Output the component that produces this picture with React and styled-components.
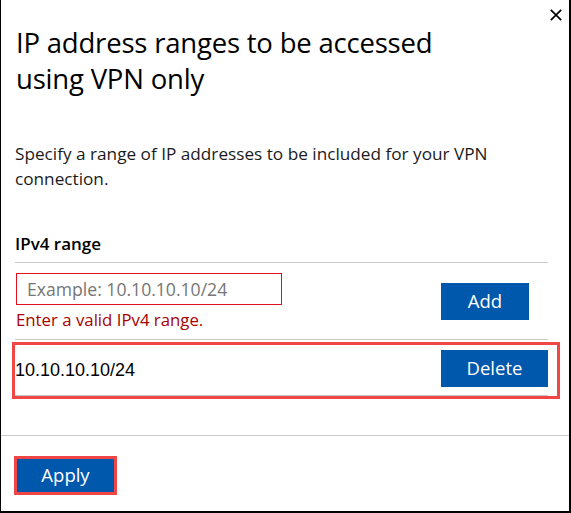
import React from "react";
import styled, { createGlobalStyle } from "styled-components";

const GlobalStyle = createGlobalStyle`
  html, body {
    margin: 0;
    padding: 0;
    background: #ffffff;
  }
  * {
    box-sizing: border-box;
  }
`;

const uiFont = `"Segoe UI", "Open Sans", "Noto Sans", sans-serif`;
const blue = "#0058ad";

const Dialog = styled.div`
  position: relative;
  width: 571px;
  height: 513px;
  display: flex;
  flex-direction: column;
  background: #ffffff;
  border-left: 1px solid #000;
  border-right: 2px solid #000;
  border-bottom: 2px solid #000;
  font-family: ${uiFont};
  color: #000;
`;

const CloseButton = styled.button`
  position: absolute;
  top: 9px;
  right: 7px;
  width: 12px;
  height: 12px;
  padding: 0;
  border: 0;
  background: none;
  cursor: pointer;
  display: block;
  svg {
    display: block;
  }
`;

const Title = styled.h2`
  margin: 25px 0 0;
  padding: 0 100px 0 15px;
  font-size: 27.5px;
  line-height: 36px;
  font-weight: 400;
  letter-spacing: -0.2px;
`;

const Body = styled.div`
  padding: 0 21px 0 14px;
`;

const Description = styled.p`
  margin: 44px 0 0;
  font-size: 17.2px;
  line-height: 25px;
  color: #1b1b1b;
`;

const FieldLabel = styled.div`
  margin: 41px 0 6px;
  font-size: 17px;
  line-height: 24px;
  font-weight: 600;
`;

const Divider = styled.hr`
  margin: 0;
  border: 0;
  border-top: 1px solid #c8c8c8;
`;

const InputRow = styled.div`
  display: flex;
  justify-content: space-between;
  align-items: flex-start;
  padding: 10px 0 8px;
  border-bottom: 1px solid #c8c8c8;
`;

const InputColumn = styled.div`
  display: flex;
  flex-direction: column;
  padding-left: 1px;
`;

const TextInput = styled.input`
  width: 266px;
  height: 32px;
  padding: 0 10px;
  border: 1px solid #e0101e;
  outline: none;
  font-family: ${uiFont};
  font-size: 17.6px;
  color: #000;
  &::placeholder {
    color: #767676;
  }
`;

const ErrorText = styled.div`
  margin-top: 4px;
  font-size: 16.8px;
  line-height: 22px;
  color: #a80000;
`;

const ActionCell = styled.div`
  width: 107px;
  padding-top: 10px;
`;

const Button = styled.button`
  display: block;
  width: ${(p) => p.$width};
  height: ${(p) => (p.$outlined ? "39px" : "37px")};
  padding: 0;
  border: ${(p) => (p.$outlined ? "3px solid #f04646" : "0")};
  background: ${blue};
  color: #ffffff;
  font-family: ${uiFont};
  font-size: 18.5px;
  line-height: 1;
  cursor: pointer;
`;

const Highlight = styled.div`
  margin: 2px -12px 0 -3px;
  border: 3px solid #f04646;
`;

const RangeRow = styled.div`
  display: flex;
  justify-content: space-between;
  align-items: center;
  margin-right: 9px;
  padding: 5px 0 8px;
  border-bottom: 1px solid #c8c8c8;
`;

const RangeValue = styled.span`
  margin-top: 3px;
  font-family: "Liberation Sans", Arial, sans-serif;
  font-size: 18px;
  color: #000;
`;

const Footer = styled.div`
  margin-top: auto;
  padding: 20px 13px 16px;
  border-top: 1px solid #c8c8c8;
`;

const CloseIcon = () => (
  <svg width="12" height="12" viewBox="0 0 12 12">
    <path d="M0.8 0.8 L11.2 11.2 M11.2 0.8 L0.8 11.2" stroke="#000" strokeWidth="1.7" />
  </svg>
);

export default function App() {
  const ranges = ["10.10.10.10/24"];

  return (
    <>
      <GlobalStyle />
      <Dialog>
        <CloseButton aria-label="Close">
          <CloseIcon />
        </CloseButton>
        <Title>IP address ranges to be accessed using VPN only</Title>
        <Body>
          <Description>
            Specify a range of IP addresses to be included for your VPN connection.
          </Description>
          <FieldLabel>IPv4 range</FieldLabel>
          <Divider />
          <InputRow>
            <InputColumn>
              <TextInput placeholder="Example: 10.10.10.10/24" />
              <ErrorText>Enter a valid IPv4 range.</ErrorText>
            </InputColumn>
            <ActionCell>
              <Button $width="88px">Add</Button>
            </ActionCell>
          </InputRow>
          <Highlight>
            {ranges.map((r) => (
              <RangeRow key={r}>
                <RangeValue>{r}</RangeValue>
                <Button $width="107px">Delete</Button>
              </RangeRow>
            ))}
          </Highlight>
        </Body>
        <Footer>
          <Button $outlined $width="103px">
            Apply
          </Button>
        </Footer>
      </Dialog>
    </>
  );
}
